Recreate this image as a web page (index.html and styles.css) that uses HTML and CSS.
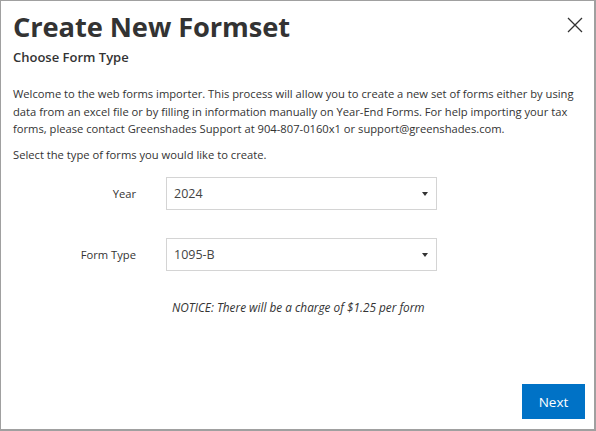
FILE: index.html
```html
<!DOCTYPE html>
<html lang="en">
<head>
<meta charset="utf-8">
<title>Create New Formset</title>
<link rel="stylesheet" href="styles.css">
</head>
<body>
<div class="dialog">
  <div class="header">
    <div class="titles">
      <h1 class="title">Create New Formset</h1>
      <h2 class="subtitle">Choose Form Type</h2>
    </div>
    <button class="close" aria-label="Close">
      <svg width="16" height="16" viewBox="0 0 16 16"><path d="M1 1 L15 15 M15 1 L1 15" stroke="#333" stroke-width="1.3" fill="none"/></svg>
    </button>
  </div>
  <p class="intro">Welcome to the web forms importer. This process will allow you to create a new set of forms either by using data from an excel file or by filling in information manually on Year-End Forms. For help importing your tax forms, please contact Greenshades Support at 904-807-0160x1 or support@greenshades.com.</p>
  <p class="select-text">Select the type of forms you would like to create.</p>
  <div class="form">
    <label class="label">Year</label>
    <div class="select"><span>2024</span><span class="caret"></span></div>
    <label class="label">Form Type</label>
    <div class="select"><span>1095-B</span><span class="caret"></span></div>
  </div>
  <p class="notice">NOTICE: There will be a charge of $1.25 per form</p>
  <div class="footer">
    <button class="next">Next</button>
  </div>
</div>
</body>
</html>
```
FILE: styles.css
```css
html, body {
  margin: 0;
  padding: 0;
  background: #fff;
}
.dialog {
  box-sizing: border-box;
  width: 596px;
  height: 431px;
  border: 1px solid #a0a0a0;
  border-right-width: 2px;
  border-bottom-width: 2px;
  display: flex;
  flex-direction: column;
  font-family: "Open Sans", "Noto Sans", sans-serif;
  color: #333;
  padding: 0 0 0 12px;
}
.header {
  display: flex;
  justify-content: space-between;
  align-items: flex-start;
}
.title {
  margin: 5px 0 0 0;
  font-size: 27.3px;
  font-weight: 700;
  line-height: 41px;
  letter-spacing: -0.1px;
}
.subtitle {
  margin: 0;
  font-size: 13px;
  font-weight: 600;
  line-height: 20px;
}
.close {
  margin: 16px 11px 0 0;
  padding: 0;
  border: 0;
  background: none;
  width: 16px;
  height: 16px;
  display: flex;
}
.intro {
  margin: 18px 10px 0 0;
  font-size: 11.2px;
  line-height: 17.6px;
}
.select-text {
  margin: 8px 0 0 0;
  font-size: 11.2px;
  line-height: 17.6px;
}
.form {
  display: grid;
  grid-template-columns: 123px 271px;
  column-gap: 30px;
  row-gap: 28px;
  align-items: center;
  margin-top: 14px;
}
.label {
  text-align: right;
  font-size: 11.2px;
}
.select {
  box-sizing: border-box;
  height: 33px;
  border: 1px solid #d4d4d4;
  display: flex;
  align-items: center;
  justify-content: space-between;
  padding: 0 8px 0 7px;
  font-size: 12.5px;
  color: #444;
}
.caret {
  width: 0;
  height: 0;
  border-left: 3.5px solid transparent;
  border-right: 3.5px solid transparent;
  border-top: 4px solid #333;
}
.notice {
  margin: 28px 0 0 159px;
  font-size: 11.8px;
  font-style: italic;
}
.footer {
  margin-top: auto;
  display: flex;
  justify-content: flex-end;
  padding: 0 9px 10px 0;
}
.next {
  width: 63px;
  height: 35px;
  border: 0;
  background: #0072c6;
  color: #fff;
  font-family: "Open Sans", "Noto Sans", sans-serif;
  font-size: 13.5px;
  padding: 0;
}
```
